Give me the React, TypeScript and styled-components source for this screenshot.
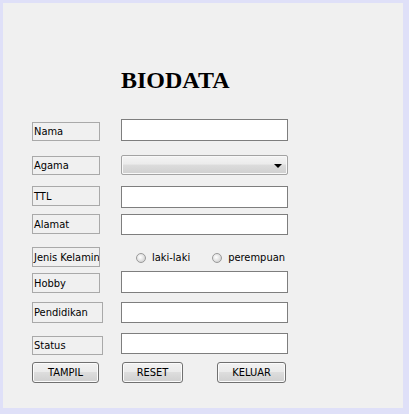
import React from "react";
import styled, { createGlobalStyle } from "styled-components";

const GlobalStyle = createGlobalStyle`
  html, body {
    margin: 0;
    padding: 0;
    background: #dfe0f8;
  }
  body {
    width: 409px;
    height: 414px;
    overflow: hidden;
    font-family: "DejaVu Sans Condensed", "DejaVu Sans", Verdana, sans-serif;
    font-size: 11px;
    color: #000;
  }
`;

const Frame = styled.div`
  margin: 3px 6px 6px 3px;
  width: 400px;
  height: 405px;
  background: #f0f0f0;
  box-sizing: border-box;
  padding-left: 29px;
  overflow: hidden;
`;

const Title = styled.h1`
  margin: 65px 0 0 89px;
  font-family: "Liberation Serif", "Times New Roman", serif;
  font-weight: bold;
  font-size: 24px;
  line-height: 24px;
  height: 24px;
  letter-spacing: 0;
`;

const Row = styled.div<{ top: number; h: number }>`
  display: flex;
  align-items: flex-start;
  margin-top: ${(p) => p.top}px;
  height: ${(p) => p.h}px;
`;

const LabelCell = styled.div`
  width: 89px;
  flex: none;
`;

const LabelBox = styled.div<{ w?: number; off?: number; h?: number }>`
  box-sizing: border-box;
  width: ${(p) => p.w ?? 68}px;
  height: ${(p) => p.h ?? 20}px;
  margin-top: ${(p) => p.off ?? 0}px;
  border: 1px solid #a9a9a9;
  padding-left: 1px;
  display: flex;
  align-items: center;
  white-space: nowrap;
  overflow: hidden;
`;

const TextField = styled.div<{ h?: number }>`
  box-sizing: border-box;
  width: 167px;
  height: ${(p) => p.h ?? 22}px;
  background: #fff;
  border: 1px solid #7e7e7e;
`;

const Combo = styled.div`
  box-sizing: border-box;
  width: 167px;
  height: 20px;
  border: 1px solid #a3a3a3;
  border-radius: 2px;
  background: linear-gradient(#f4f4f4 0%, #ebebeb 45%, #dcdcdc 50%, #cfcfcf 100%);
  box-shadow: inset 0 0 0 1px #f8f8f8;
  display: flex;
  align-items: center;
  justify-content: flex-end;
  padding-right: 5px;
`;

const Arrow = styled.div`
  width: 0;
  height: 0;
  border-left: 4px solid transparent;
  border-right: 4px solid transparent;
  border-top: 4px solid #000;
  margin-top: 1px;
`;

const RadioGroup = styled.div`
  display: flex;
  align-items: center;
  height: 20px;
  padding-left: 15px;
`;

const RadioItem = styled.label<{ gap?: number }>`
  display: flex;
  align-items: center;
  margin-right: ${(p) => p.gap ?? 0}px;
  white-space: nowrap;
`;

const RadioDot = styled.span`
  box-sizing: border-box;
  width: 10px;
  height: 10px;
  border-radius: 50%;
  border: 1px solid #9a9a9a;
  background: radial-gradient(circle at 40% 40%, #ffffff 0%, #e6e6e6 45%, #c4c4c4 100%);
  margin-right: 6px;
  margin-top: 1px;
`;

const Buttons = styled.div`
  display: flex;
  margin-top: 8px;
  height: 21px;
`;

const Button = styled.button<{ w: number; gap: number }>`
  box-sizing: border-box;
  width: ${(p) => p.w}px;
  height: 21px;
  margin-right: ${(p) => p.gap}px;
  padding: 0;
  border: 1px solid #707070;
  border-radius: 3px;
  background: linear-gradient(#f2f2f2 0%, #ebebeb 45%, #dddddd 50%, #cfcfcf 100%);
  box-shadow: inset 0 0 0 1px #fbfbfb;
  font-family: "DejaVu Sans Condensed", "DejaVu Sans", Verdana, sans-serif;
  font-size: 11px;
  color: #000;
  text-align: center;
`;

export default function App() {
  return (
    <>
      <GlobalStyle />
      <Frame>
        <Title>BIODATA</Title>

        <Row top={27} h={22}>
          <LabelCell>
            <LabelBox off={3} h={19}>Nama</LabelBox>
          </LabelCell>
          <TextField />
        </Row>

        <Row top={14} h={20}>
          <LabelCell>
            <LabelBox off={1} h={19}>Agama</LabelBox>
          </LabelCell>
          <Combo>
            <Arrow />
          </Combo>
        </Row>

        <Row top={11} h={22}>
          <LabelCell>
            <LabelBox h={20}>TTL</LabelBox>
          </LabelCell>
          <TextField />
        </Row>

        <Row top={6} h={21}>
          <LabelCell>
            <LabelBox h={20}>Alamat</LabelBox>
          </LabelCell>
          <TextField h={21} />
        </Row>

        <Row top={12} h={20}>
          <LabelCell>
            <LabelBox h={20}>Jenis Kelamin</LabelBox>
          </LabelCell>
          <RadioGroup>
            <RadioItem gap={22}>
              <RadioDot />
              laki-laki
            </RadioItem>
            <RadioItem>
              <RadioDot />
              perempuan
            </RadioItem>
          </RadioGroup>
        </Row>

        <Row top={4} h={22}>
          <LabelCell>
            <LabelBox off={2} h={20}>Hobby</LabelBox>
          </LabelCell>
          <TextField />
        </Row>

        <Row top={9} h={21}>
          <LabelCell>
            <LabelBox w={71} h={21}>Pendidikan</LabelBox>
          </LabelCell>
          <TextField h={21} />
        </Row>

        <Row top={10} h={21}>
          <LabelCell>
            <LabelBox w={71} off={3} h={19}>Status</LabelBox>
          </LabelCell>
          <TextField h={21} />
        </Row>

        <Buttons>
          <Button w={67} gap={23}>TAMPIL</Button>
          <Button w={61} gap={34}>RESET</Button>
          <Button w={69} gap={0}>KELUAR</Button>
        </Buttons>
      </Frame>
    </>
  );
}
